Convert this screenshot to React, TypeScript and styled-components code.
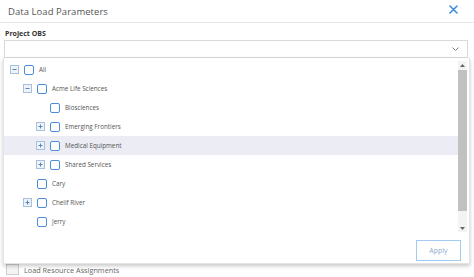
import React from 'react';
import styled, { createGlobalStyle } from 'styled-components';

type Node = {
  label: string;
  level: number;
  expander?: 'plus' | 'minus';
  active?: boolean;
};

const nodes: Node[] = [
  { label: 'All', level: 0, expander: 'minus' },
  { label: 'Acme Life Sciences', level: 1, expander: 'minus' },
  { label: 'Biosciences', level: 2 },
  { label: 'Emerging Frontiers', level: 2, expander: 'plus' },
  { label: 'Medical Equipment', level: 2, expander: 'plus', active: true },
  { label: 'Shared Services', level: 2, expander: 'plus' },
  { label: 'Cary', level: 1 },
  { label: 'Chelif River', level: 1, expander: 'plus' },
  { label: 'Jerry', level: 1 },
];

const GlobalStyle = createGlobalStyle`
  html, body {
    margin: 0;
    padding: 0;
    background: #ffffff;
  }
  body {
    font-family: "Open Sans", "Noto Sans", sans-serif;
    color: #444;
  }
`;

const Dialog = styled.div`
  width: 474px;
  height: 277px;
  overflow: hidden;
  background: #fff;
`;

const Header = styled.div`
  height: 22px;
  display: flex;
  align-items: center;
  justify-content: space-between;
  padding: 0 16px 0 8px;
  border-bottom: 1px solid #e8e8e8;
`;

const Title = styled.div`
  font-size: 9.5px;
  color: #555;
  letter-spacing: 0.05px;
`;

const CloseButton = styled.button`
  border: 0;
  background: none;
  padding: 0;
  width: 9px;
  height: 9px;
  display: flex;
  margin-top: -4px;
`;

const Body = styled.div`
  padding: 5px 6px 0 4px;
`;

const FieldLabel = styled.div`
  font-size: 7px;
  font-weight: 700;
  color: #333;
  line-height: 11px;
  padding-left: 1px;
  margin-bottom: 1px;
`;

const SelectWrap = styled.div`
  position: relative;
`;

const SelectBox = styled.div`
  height: 16px;
  border: 1px solid #dadada;
  box-shadow: 0 1px 1px rgba(0, 0, 0, 0.05);
  display: flex;
  align-items: center;
  justify-content: flex-end;
  padding-right: 8px;
`;

const DropPanel = styled.div`
  position: absolute;
  top: 100%;
  left: -1px;
  width: 467px;
  height: 206px;
  background: #fff;
  border: 1px solid #e4e4e4;
  border-top: 0;
  box-sizing: border-box;
  box-shadow: 0 2px 4px rgba(0, 0, 0, 0.22);
  display: flex;
  flex-direction: column;
  z-index: 2;
`;

const ListArea = styled.div`
  height: 174px;
  display: flex;
`;

const TreeList = styled.div`
  flex: 1;
  overflow: hidden;
  padding-top: 2px;
`;

const Row = styled.div<{ $level: number; $active?: boolean }>`
  height: 19px;
  display: flex;
  align-items: center;
  padding-left: ${(p) => 6 + p.$level * 13}px;
  background: ${(p) => (p.$active ? '#ececf4' : 'transparent')};
`;

const ExpanderSlot = styled.div`
  width: 9px;
  height: 9px;
  display: flex;
  align-items: center;
  justify-content: center;
`;

const ExpanderBox = styled.div`
  width: 7px;
  height: 7px;
  border: 1px solid #a9c0dd;
  background: #eef3fa;
  display: flex;
  align-items: center;
  justify-content: center;
`;

const Check = styled.div`
  width: 8px;
  height: 8px;
  margin-left: 5px;
  border: 1.5px solid #4b8fdc;
  border-radius: 2px;
  background: #fff;
`;

const NodeLabel = styled.span`
  margin-left: 5px;
  font-size: 6.3px;
  color: #555;
  white-space: nowrap;
`;

const ScrollTrack = styled.div`
  width: 9px;
  margin: 3px 2px 0 0;
  display: flex;
  flex-direction: column;
  background: #f3f3f3;
`;

const ScrollArrow = styled.div`
  height: 8px;
  display: flex;
  align-items: center;
  justify-content: center;
`;

const ThumbLane = styled.div`
  flex: 1;
  padding-top: 1px;
`;

const Thumb = styled.div`
  height: 141px;
  background: #c1c1c1;
`;

const Footer = styled.div`
  flex: 1;
  display: flex;
  justify-content: flex-end;
  align-items: flex-start;
  padding: 8px 8px 0 0;
`;

const ApplyButton = styled.button`
  width: 45px;
  height: 21px;
  border: 1px solid #a3cbf2;
  background: #fff;
  color: #8eaccb;
  font-family: "Open Sans", "Noto Sans", sans-serif;
  font-size: 7px;
  padding: 0;
`;

const CheckRow = styled.div`
  margin-top: 206px;
  display: flex;
  align-items: center;
  padding-left: 2px;
`;

const PlainCheck = styled.div`
  width: 11px;
  height: 9px;
  border: 1px solid #cfcfcf;
  background: #f4f4f4;
`;

const CheckText = styled.span`
  margin-left: 5px;
  font-size: 7.3px;
  color: #666;
`;

const Sign: React.FC<{ kind: 'plus' | 'minus' }> = ({ kind }) => (
  <svg width="5" height="5" viewBox="0 0 5 5">
    <line x1="0.5" y1="2.5" x2="4.5" y2="2.5" stroke="#5b86bd" strokeWidth="1" />
    {kind === 'plus' && <line x1="2.5" y1="0.5" x2="2.5" y2="4.5" stroke="#5b86bd" strokeWidth="1" />}
  </svg>
);

const TreeRow: React.FC<{ node: Node }> = ({ node }) => (
  <Row $level={node.level} $active={node.active}>
    <ExpanderSlot>
      {node.expander && (
        <ExpanderBox>
          <Sign kind={node.expander} />
        </ExpanderBox>
      )}
    </ExpanderSlot>
    <Check />
    <NodeLabel>{node.label}</NodeLabel>
  </Row>
);

const App: React.FC = () => {
  return (
    <Dialog>
      <GlobalStyle />
      <Header>
        <Title>Data Load Parameters</Title>
        <CloseButton aria-label="close">
          <svg width="9" height="9" viewBox="0 0 9 9">
            <path d="M1 1 L8 8 M8 1 L1 8" stroke="#3d8fdb" strokeWidth="1.6" strokeLinecap="round" />
          </svg>
        </CloseButton>
      </Header>
      <Body>
        <FieldLabel>Project OBS</FieldLabel>
        <SelectWrap>
          <SelectBox>
            <svg width="7" height="4" viewBox="0 0 7 4">
              <polyline points="0.5,0.5 3.5,3.5 6.5,0.5" fill="none" stroke="#888" strokeWidth="1" />
            </svg>
          </SelectBox>
          <DropPanel>
            <ListArea>
              <TreeList>
                {nodes.map((n) => (
                  <TreeRow key={n.label} node={n} />
                ))}
              </TreeList>
              <ScrollTrack>
                <ScrollArrow>
                  <svg width="5" height="3" viewBox="0 0 5 3">
                    <polygon points="0,3 2.5,0 5,3" fill="#666" />
                  </svg>
                </ScrollArrow>
                <ThumbLane>
                  <Thumb />
                </ThumbLane>
                <ScrollArrow>
                  <svg width="5" height="3" viewBox="0 0 5 3">
                    <polygon points="0,0 2.5,3 5,0" fill="#666" />
                  </svg>
                </ScrollArrow>
              </ScrollTrack>
            </ListArea>
            <Footer>
              <ApplyButton>Apply</ApplyButton>
            </Footer>
          </DropPanel>
        </SelectWrap>
        <CheckRow>
          <PlainCheck />
          <CheckText>Load Resource Assignments</CheckText>
        </CheckRow>
      </Body>
    </Dialog>
  );
};

export default App;
